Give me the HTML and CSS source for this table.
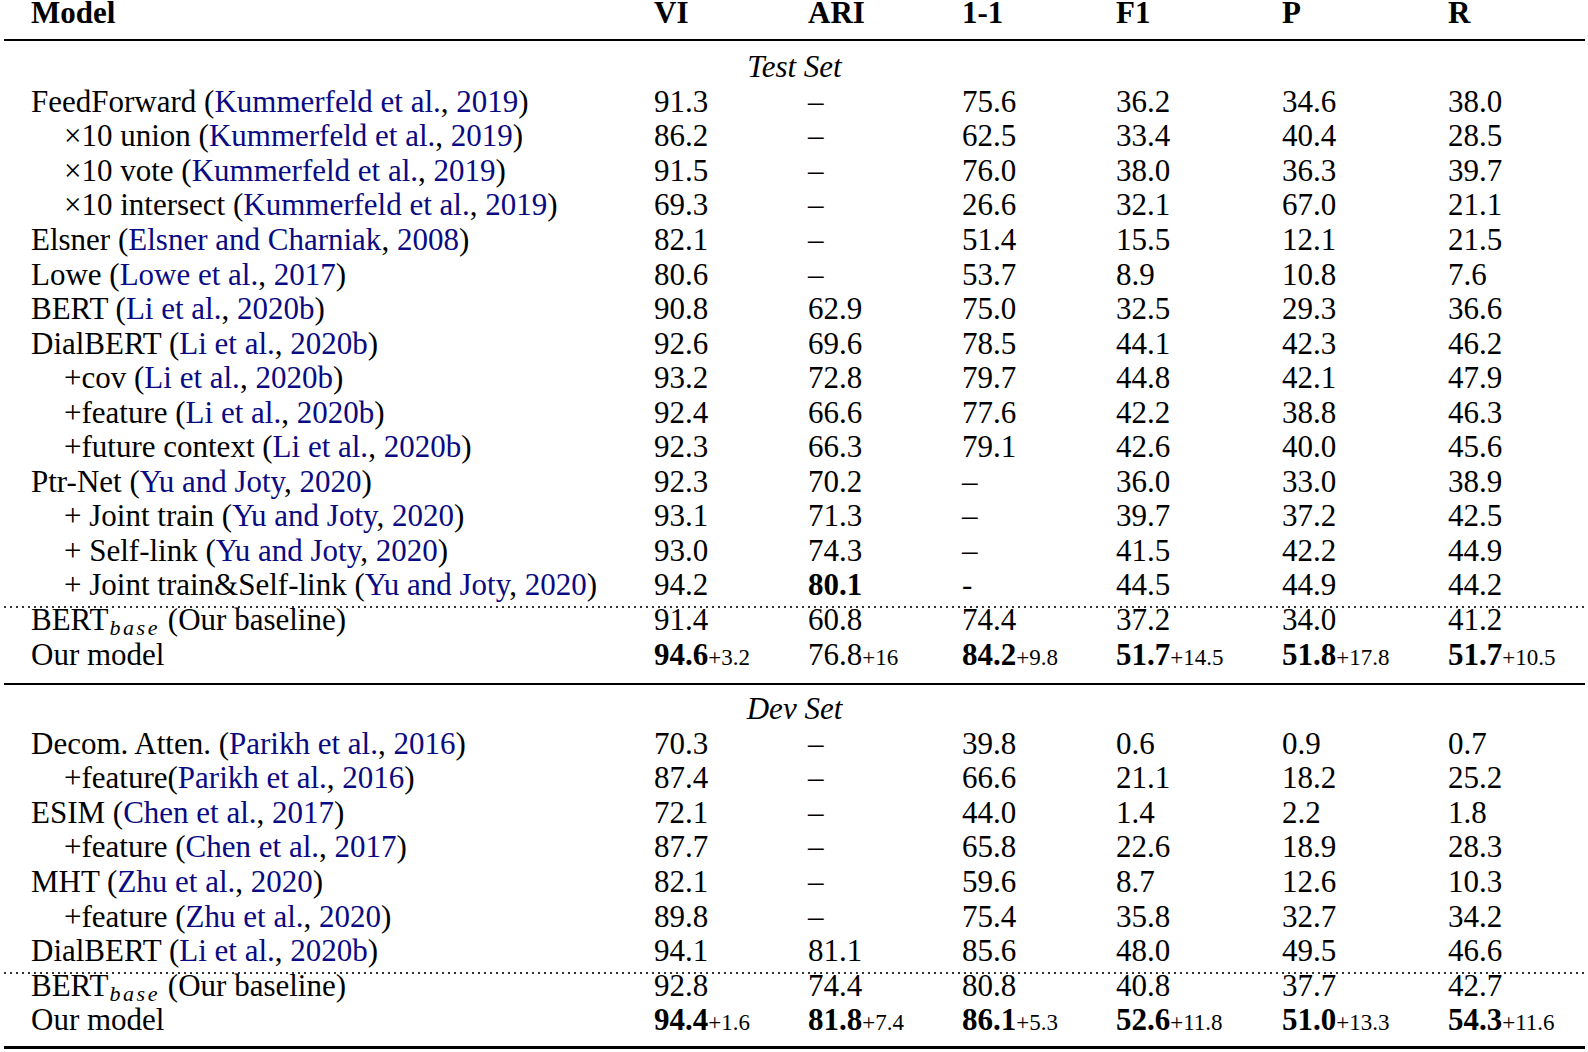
FILE: index.html
```html
<!DOCTYPE html>
<html>
<head>
<meta charset="utf-8">
<link rel="stylesheet" href="styles.css">
</head>
<body>
<div class="tbl">
  <div class="row head">
    <div class="c m">Model</div><div class="c">VI</div><div class="c">ARI</div><div class="c">1-1</div><div class="c">F1</div><div class="c">P</div><div class="c">R</div>
  </div>
  <div class="rule top"></div>
  <div class="sect">Test Set</div>

  <div class="row"><div class="c m">FeedForward (<a>Kummerfeld et al.</a>, <a>2019</a>)</div><div class="c">91.3</div><div class="c">–</div><div class="c">75.6</div><div class="c">36.2</div><div class="c">34.6</div><div class="c">38.0</div></div>
  <div class="row"><div class="c m in">×10 union (<a>Kummerfeld et al.</a>, <a>2019</a>)</div><div class="c">86.2</div><div class="c">–</div><div class="c">62.5</div><div class="c">33.4</div><div class="c">40.4</div><div class="c">28.5</div></div>
  <div class="row"><div class="c m in">×10 vote (<a>Kummerfeld et al.</a>, <a>2019</a>)</div><div class="c">91.5</div><div class="c">–</div><div class="c">76.0</div><div class="c">38.0</div><div class="c">36.3</div><div class="c">39.7</div></div>
  <div class="row"><div class="c m in">×10 intersect (<a>Kummerfeld et al.</a>, <a>2019</a>)</div><div class="c">69.3</div><div class="c">–</div><div class="c">26.6</div><div class="c">32.1</div><div class="c">67.0</div><div class="c">21.1</div></div>
  <div class="row"><div class="c m">Elsner (<a>Elsner and Charniak</a>, <a>2008</a>)</div><div class="c">82.1</div><div class="c">–</div><div class="c">51.4</div><div class="c">15.5</div><div class="c">12.1</div><div class="c">21.5</div></div>
  <div class="row"><div class="c m">Lowe (<a>Lowe et al.</a>, <a>2017</a>)</div><div class="c">80.6</div><div class="c">–</div><div class="c">53.7</div><div class="c">8.9</div><div class="c">10.8</div><div class="c">7.6</div></div>
  <div class="row"><div class="c m">BERT (<a>Li et al.</a>, <a>2020b</a>)</div><div class="c">90.8</div><div class="c">62.9</div><div class="c">75.0</div><div class="c">32.5</div><div class="c">29.3</div><div class="c">36.6</div></div>
  <div class="row"><div class="c m">DialBERT (<a>Li et al.</a>, <a>2020b</a>)</div><div class="c">92.6</div><div class="c">69.6</div><div class="c">78.5</div><div class="c">44.1</div><div class="c">42.3</div><div class="c">46.2</div></div>
  <div class="row"><div class="c m in">+cov (<a>Li et al.</a>, <a>2020b</a>)</div><div class="c">93.2</div><div class="c">72.8</div><div class="c">79.7</div><div class="c">44.8</div><div class="c">42.1</div><div class="c">47.9</div></div>
  <div class="row"><div class="c m in">+feature (<a>Li et al.</a>, <a>2020b</a>)</div><div class="c">92.4</div><div class="c">66.6</div><div class="c">77.6</div><div class="c">42.2</div><div class="c">38.8</div><div class="c">46.3</div></div>
  <div class="row"><div class="c m in">+future context (<a>Li et al.</a>, <a>2020b</a>)</div><div class="c">92.3</div><div class="c">66.3</div><div class="c">79.1</div><div class="c">42.6</div><div class="c">40.0</div><div class="c">45.6</div></div>
  <div class="row"><div class="c m">Ptr-Net (<a>Yu and Joty</a>, <a>2020</a>)</div><div class="c">92.3</div><div class="c">70.2</div><div class="c">–</div><div class="c">36.0</div><div class="c">33.0</div><div class="c">38.9</div></div>
  <div class="row"><div class="c m in">+ Joint train (<a>Yu and Joty</a>, <a>2020</a>)</div><div class="c">93.1</div><div class="c">71.3</div><div class="c">–</div><div class="c">39.7</div><div class="c">37.2</div><div class="c">42.5</div></div>
  <div class="row"><div class="c m in">+ Self-link (<a>Yu and Joty</a>, <a>2020</a>)</div><div class="c">93.0</div><div class="c">74.3</div><div class="c">–</div><div class="c">41.5</div><div class="c">42.2</div><div class="c">44.9</div></div>
  <div class="row"><div class="c m in">+ Joint train&amp;Self-link (<a>Yu and Joty</a>, <a>2020</a>)</div><div class="c">94.2</div><div class="c"><b>80.1</b></div><div class="c">-</div><div class="c">44.5</div><div class="c">44.9</div><div class="c">44.2</div></div>
  <div class="dots"></div>
  <div class="row"><div class="c m">BERT<i class="sub">base</i> (Our baseline)</div><div class="c">91.4</div><div class="c">60.8</div><div class="c">74.4</div><div class="c">37.2</div><div class="c">34.0</div><div class="c">41.2</div></div>
  <div class="row"><div class="c m">Our model</div><div class="c"><b>94.6</b><small>+3.2</small></div><div class="c">76.8<small>+16</small></div><div class="c"><b>84.2</b><small>+9.8</small></div><div class="c"><b>51.7</b><small>+14.5</small></div><div class="c"><b>51.8</b><small>+17.8</small></div><div class="c"><b>51.7</b><small>+10.5</small></div></div>

  <div class="rule mid"></div>
  <div class="sect">Dev Set</div>

  <div class="row"><div class="c m">Decom. Atten. (<a>Parikh et al.</a>, <a>2016</a>)</div><div class="c">70.3</div><div class="c">–</div><div class="c">39.8</div><div class="c">0.6</div><div class="c">0.9</div><div class="c">0.7</div></div>
  <div class="row"><div class="c m in">+feature(<a>Parikh et al.</a>, <a>2016</a>)</div><div class="c">87.4</div><div class="c">–</div><div class="c">66.6</div><div class="c">21.1</div><div class="c">18.2</div><div class="c">25.2</div></div>
  <div class="row"><div class="c m">ESIM (<a>Chen et al.</a>, <a>2017</a>)</div><div class="c">72.1</div><div class="c">–</div><div class="c">44.0</div><div class="c">1.4</div><div class="c">2.2</div><div class="c">1.8</div></div>
  <div class="row"><div class="c m in">+feature (<a>Chen et al.</a>, <a>2017</a>)</div><div class="c">87.7</div><div class="c">–</div><div class="c">65.8</div><div class="c">22.6</div><div class="c">18.9</div><div class="c">28.3</div></div>
  <div class="row"><div class="c m">MHT (<a>Zhu et al.</a>, <a>2020</a>)</div><div class="c">82.1</div><div class="c">–</div><div class="c">59.6</div><div class="c">8.7</div><div class="c">12.6</div><div class="c">10.3</div></div>
  <div class="row"><div class="c m in">+feature (<a>Zhu et al.</a>, <a>2020</a>)</div><div class="c">89.8</div><div class="c">–</div><div class="c">75.4</div><div class="c">35.8</div><div class="c">32.7</div><div class="c">34.2</div></div>
  <div class="row"><div class="c m">DialBERT (<a>Li et al.</a>, <a>2020b</a>)</div><div class="c">94.1</div><div class="c">81.1</div><div class="c">85.6</div><div class="c">48.0</div><div class="c">49.5</div><div class="c">46.6</div></div>
  <div class="dots"></div>
  <div class="row"><div class="c m">BERT<i class="sub">base</i> (Our baseline)</div><div class="c">92.8</div><div class="c">74.4</div><div class="c">80.8</div><div class="c">40.8</div><div class="c">37.7</div><div class="c">42.7</div></div>
  <div class="row"><div class="c m">Our model</div><div class="c"><b>94.4</b><small>+1.6</small></div><div class="c"><b>81.8</b><small>+7.4</small></div><div class="c"><b>86.1</b><small>+5.3</small></div><div class="c"><b>52.6</b><small>+11.8</small></div><div class="c"><b>51.0</b><small>+13.3</small></div><div class="c"><b>54.3</b><small>+11.6</small></div></div>
  <div class="rule bot"></div>
</div>
</body>
</html>
```

FILE: styles.css
```css
html, body {
  margin: 0;
  padding: 0;
  background: #fff;
}
body {
  font-family: "Liberation Serif", "Times New Roman", serif;
  font-size: 31px;
  color: #000;
  overflow: hidden;
}
.tbl {
  margin-left: 4px;
  width: 1581px;
}
.row {
  display: grid;
  grid-template-columns: 650px 154px 154px 154px 166px 166px 1fr;
  height: 34.56px;
  line-height: 34.56px;
  white-space: nowrap;
}
.c.m {
  padding-left: 27px;
}
.c.m.in {
  padding-left: 60px;
}
.head {
  font-weight: bold;
  margin-top: -4.3px;
}
.rule {
  background: #000;
}
.rule.top {
  height: 2px;
  margin-top: 9px;
  margin-bottom: 9px;
}
.rule.mid {
  height: 2px;
  margin-top: 10.5px;
  margin-bottom: 7.7px;
}
.rule.bot {
  height: 3px;
  margin-top: 8.5px;
}
.sect {
  font-style: italic;
  text-align: center;
  height: 34.56px;
  line-height: 34.56px;
}
a {
  color: #0a0a82;
  text-decoration: none;
}
b {
  font-weight: bold;
}
small {
  font-size: 23px;
}
.sub {
  font-size: 22px;
  line-height: 1;
  letter-spacing: 2.6px;
  vertical-align: -5px;
  margin-left: 1px;
}
.dots {
  height: 2px;
  margin: 3.3px 0 -5.3px;
  background-image: linear-gradient(to right, #333 0, #333 2px, transparent 2px, transparent 6px);
  background-size: 6px 2px;
  background-repeat: repeat-x;
}
```
